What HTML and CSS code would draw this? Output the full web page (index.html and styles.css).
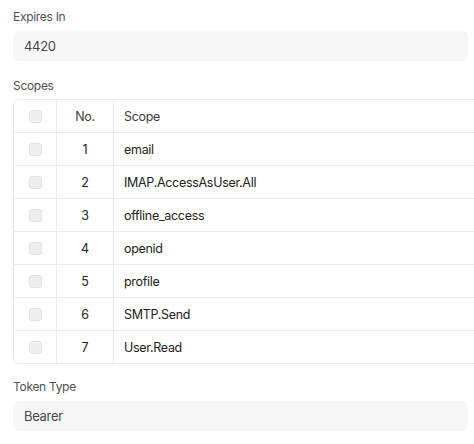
FILE: index.html
```html
<!DOCTYPE html>
<html>
<head>
<meta charset="utf-8">
<link rel="stylesheet" href="styles.css">
</head>
<body>
<div class="form">
  <div class="field">
    <div class="label">Expires In</div>
    <div class="input">4420</div>
  </div>
  <div class="field field-table">
    <div class="label">Scopes</div>
    <div class="grid">
      <div class="row head">
        <div class="cell check"><span class="box"></span></div>
        <div class="cell no">No.</div>
        <div class="cell scope">Scope</div>
      </div>
      <div class="row"><div class="cell check"><span class="box"></span></div><div class="cell no">1</div><div class="cell scope">email</div></div>
      <div class="row"><div class="cell check"><span class="box"></span></div><div class="cell no">2</div><div class="cell scope">IMAP.AccessAsUser.All</div></div>
      <div class="row"><div class="cell check"><span class="box"></span></div><div class="cell no">3</div><div class="cell scope">offline_access</div></div>
      <div class="row"><div class="cell check"><span class="box"></span></div><div class="cell no">4</div><div class="cell scope">openid</div></div>
      <div class="row"><div class="cell check"><span class="box"></span></div><div class="cell no">5</div><div class="cell scope">profile</div></div>
      <div class="row"><div class="cell check"><span class="box"></span></div><div class="cell no">6</div><div class="cell scope">SMTP.Send</div></div>
      <div class="row last"><div class="cell check"><span class="box"></span></div><div class="cell no">7</div><div class="cell scope">User.Read</div></div>
    </div>
  </div>
  <div class="field">
    <div class="label">Token Type</div>
    <div class="input">Bearer</div>
  </div>
</div>
</body>
</html>
```
FILE: styles.css
```css
html, body {
  margin: 0;
  padding: 0;
  overflow: hidden;
  background: #ffffff;
}
body {
  font-family: Inter, "Noto Sans", sans-serif;
  color: #1f2328;
  width: 474px;
  height: 444px;
  letter-spacing: -0.3px;
}
.form {
  display: flex;
  flex-direction: column;
  padding: 9px 0 0 13px;
  gap: 17px;
}
.field {
  display: flex;
  flex-direction: column;
  gap: 6px;
}
.field-table {
  gap: 5px;
  margin-bottom: -2px;
}
.label {
  font-size: 12px;
  line-height: 16px;
  color: #4f4f4f;
}
.input {
  width: 455px;
  height: 30px;
  box-sizing: border-box;
  background: #f7f7f7;
  border-radius: 6px;
  padding: 0 11px;
  display: flex;
  align-items: center;
  font-size: 13px;
  color: #474747;
}
.grid {
  width: 480px;
  border: 1px solid #ebebeb;
  border-radius: 6px;
  box-sizing: border-box;
}
.row {
  display: flex;
  height: 33px;
  border-bottom: 1px solid #ebebeb;
  box-sizing: border-box;
}
.row.last {
  border-bottom: none;
  height: 32px;
}
.cell {
  display: flex;
  align-items: center;
  font-size: 12.5px;
  color: #222222;
  box-sizing: border-box;
}
.check {
  width: 43px;
  justify-content: center;
  border-right: 1px solid #ebebeb;
}
.no {
  width: 57px;
  justify-content: center;
  border-right: 1px solid #ebebeb;
}
.scope {
  flex: 1;
  padding-left: 10px;
}
.head .cell {
  color: #3d3d3d;
}
.box {
  width: 13px;
  height: 13px;
  border-radius: 3px;
  background: #eeeeee;
  border: 1px solid #e2e2e2;
  box-sizing: border-box;
}
```
